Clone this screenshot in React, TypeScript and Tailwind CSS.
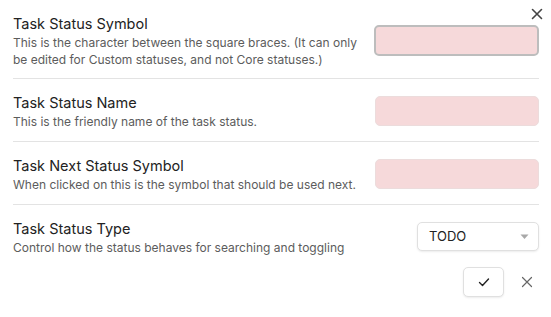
import React from "react";

function Row({
  title,
  desc,
  children,
  first,
}: {
  title: string;
  desc: React.ReactNode;
  children: React.ReactNode;
  first?: boolean;
}) {
  return (
    <div
      className={
        "flex items-center pt-3 " +
        (first ? "pb-[10px]" : "pb-[11px] border-t border-[#e3e3e3]")
      }
    >
      <div className="flex-1 pr-4">
        <div className="pt-[2px] text-[14.5px] leading-[20px] text-[#222222]">
          {title}
        </div>
        <div className="text-[12px] leading-[17px] text-[#5c5c5c]">{desc}</div>
      </div>
      {children}
    </div>
  );
}

function PinkInput({ focused }: { focused?: boolean }) {
  return (
    <div
      className={
        "rounded-[5px] bg-[#f6d9da] " +
        (focused
          ? "border-2 border-[#bdbdbd] w-[165px] h-[31px]"
          : "border border-[#ecdcdc] h-[30px] w-[164px]")
      }
    />
  );
}

export default function App() {
  return (
    <div
      className="relative w-[551px] h-[317px] bg-white pl-[13px] pr-[12px]"
      style={{ fontFamily: "Inter, 'Noto Sans', sans-serif" }}
    >
      <button className="absolute right-[8px] top-[8px] p-0">
        <svg width="12" height="12" viewBox="0 0 12 12">
          <path
            d="M1.5 1.5 L10.5 10.5 M10.5 1.5 L1.5 10.5"
            stroke="#444"
            strokeWidth="1.6"
            strokeLinecap="round"
          />
        </svg>
      </button>
      <Row
        first
        title="Task Status Symbol"
        desc={
          <>
            This is the character between the square braces. (It can only
            <br />
            be edited for Custom statuses, and not Core statuses.)
          </>
        }
      >
        <PinkInput focused />
      </Row>
      <Row
        title="Task Status Name"
        desc="This is the friendly name of the task status."
      >
        <PinkInput />
      </Row>
      <Row
        title="Task Next Status Symbol"
        desc="When clicked on this is the symbol that should be used next."
      >
        <PinkInput />
      </Row>
      <Row
        title="Task Status Type"
        desc="Control how the status behaves for searching and toggling"
      >
        <div className="flex h-[29px] w-[122px] items-center justify-between rounded-[5px] border border-[#e0e0e0] bg-white pl-[11px] pr-[9px] shadow-[0_1px_2px_rgba(0,0,0,0.08)]">
          <span className="text-[13px] text-[#222]">TODO</span>
          <svg width="9" height="6" viewBox="0 0 9 6">
            <path d="M0.5 0.5 L8.5 0.5 L4.5 5 Z" fill="#a8a8a8" />
          </svg>
        </div>
      </Row>
      <div className="flex items-center justify-end gap-[17px] pr-[6px]">
        <button className="flex h-[30px] w-[41px] items-center justify-center rounded-[5px] border border-[#e0e0e0] bg-white shadow-[0_1px_2px_rgba(0,0,0,0.08)]">
          <svg width="14" height="14" viewBox="0 0 14 14">
            <path
              d="M2.5 7.5 L5.5 10.5 L11.5 4"
              stroke="#222"
              strokeWidth="1.4"
              fill="none"
              strokeLinecap="round"
              strokeLinejoin="round"
            />
          </svg>
        </button>
        <svg width="12" height="12" viewBox="0 0 12 12">
          <path
            d="M1.5 1.5 L10.5 10.5 M10.5 1.5 L1.5 10.5"
            stroke="#666"
            strokeWidth="1.2"
            strokeLinecap="round"
          />
        </svg>
      </div>
    </div>
  );
}
